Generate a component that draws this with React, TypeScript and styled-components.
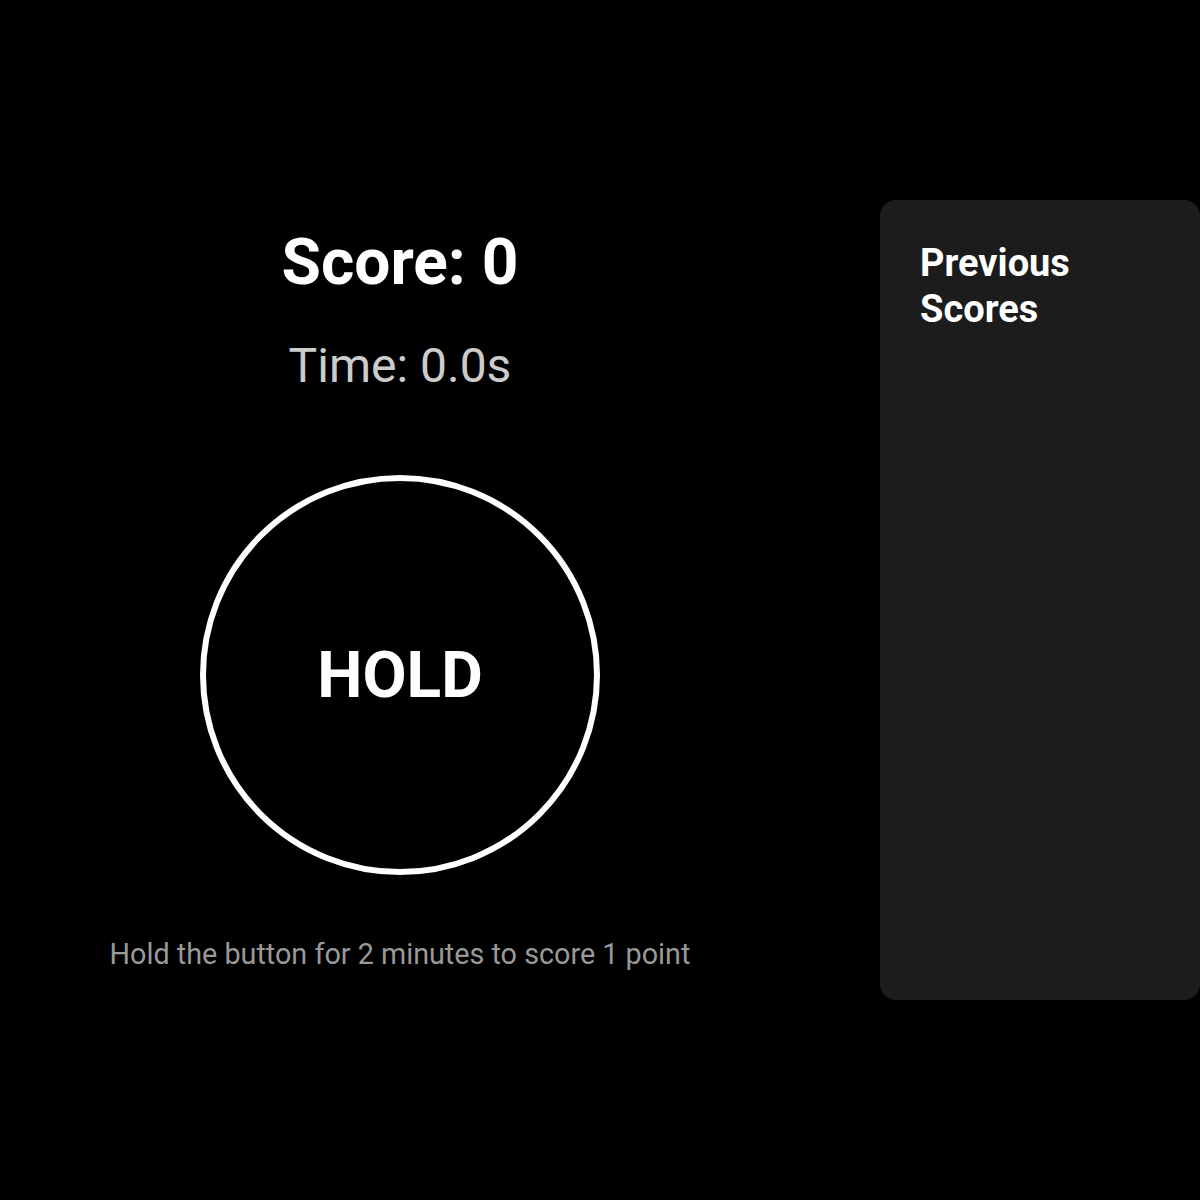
import styled, { createGlobalStyle } from 'styled-components';

const GlobalStyle = createGlobalStyle`
  html, body {
    margin: 0;
    padding: 0;
    background: #000;
  }

  body {
    font-family: Roboto, 'Liberation Sans', sans-serif;
    color: #fff;
  }
`;

const App: React.FC = () => {
  return (
    <>
      <GlobalStyle />
      <Page>
        <Main>
          <Score>Score: 0</Score>
          <Time>Time: 0.0s</Time>
          <HoldButton type="button">HOLD</HoldButton>
          <Hint>Hold the button for 2 minutes to score 1 point</Hint>
        </Main>
        <Sidebar>
          <SidebarTitle>Previous Scores</SidebarTitle>
        </Sidebar>
      </Page>
    </>
  );
};

export default App;

const Page = styled.div`
  width: 1200px;
  height: 1200px;
  display: flex;
  align-items: center;
  gap: 80px;
  background: #000;
`;

const Main = styled.main`
  flex: 1;
  display: flex;
  flex-direction: column;
  align-items: center;
`;

const Score = styled.h1`
  margin: 0;
  font-size: 64px;
  line-height: 1;
  font-weight: 700;
  color: #fff;
`;

const Time = styled.div`
  margin-top: 47px;
  font-size: 48px;
  line-height: 1;
  color: #cccccc;
`;

const HoldButton = styled.button`
  margin-top: 85px;
  width: 400px;
  height: 400px;
  box-sizing: border-box;
  border: 6px solid #fff;
  border-radius: 50%;
  background: #000;
  color: #fff;
  font-family: Roboto, 'Liberation Sans', sans-serif;
  font-size: 64px;
  font-weight: 700;
  cursor: pointer;
`;

const Hint = styled.p`
  margin: 65px 0 0;
  font-size: 28.75px;
  line-height: 1;
  color: #999999;
`;

const Sidebar = styled.aside`
  width: 320px;
  height: 800px;
  box-sizing: border-box;
  padding: 40px;
  background: #1c1c1c;
  border-radius: 16px;
`;

const SidebarTitle = styled.h2`
  margin: 0;
  font-size: 38px;
  line-height: 46px;
  font-weight: 700;
  color: #fff;
`;
